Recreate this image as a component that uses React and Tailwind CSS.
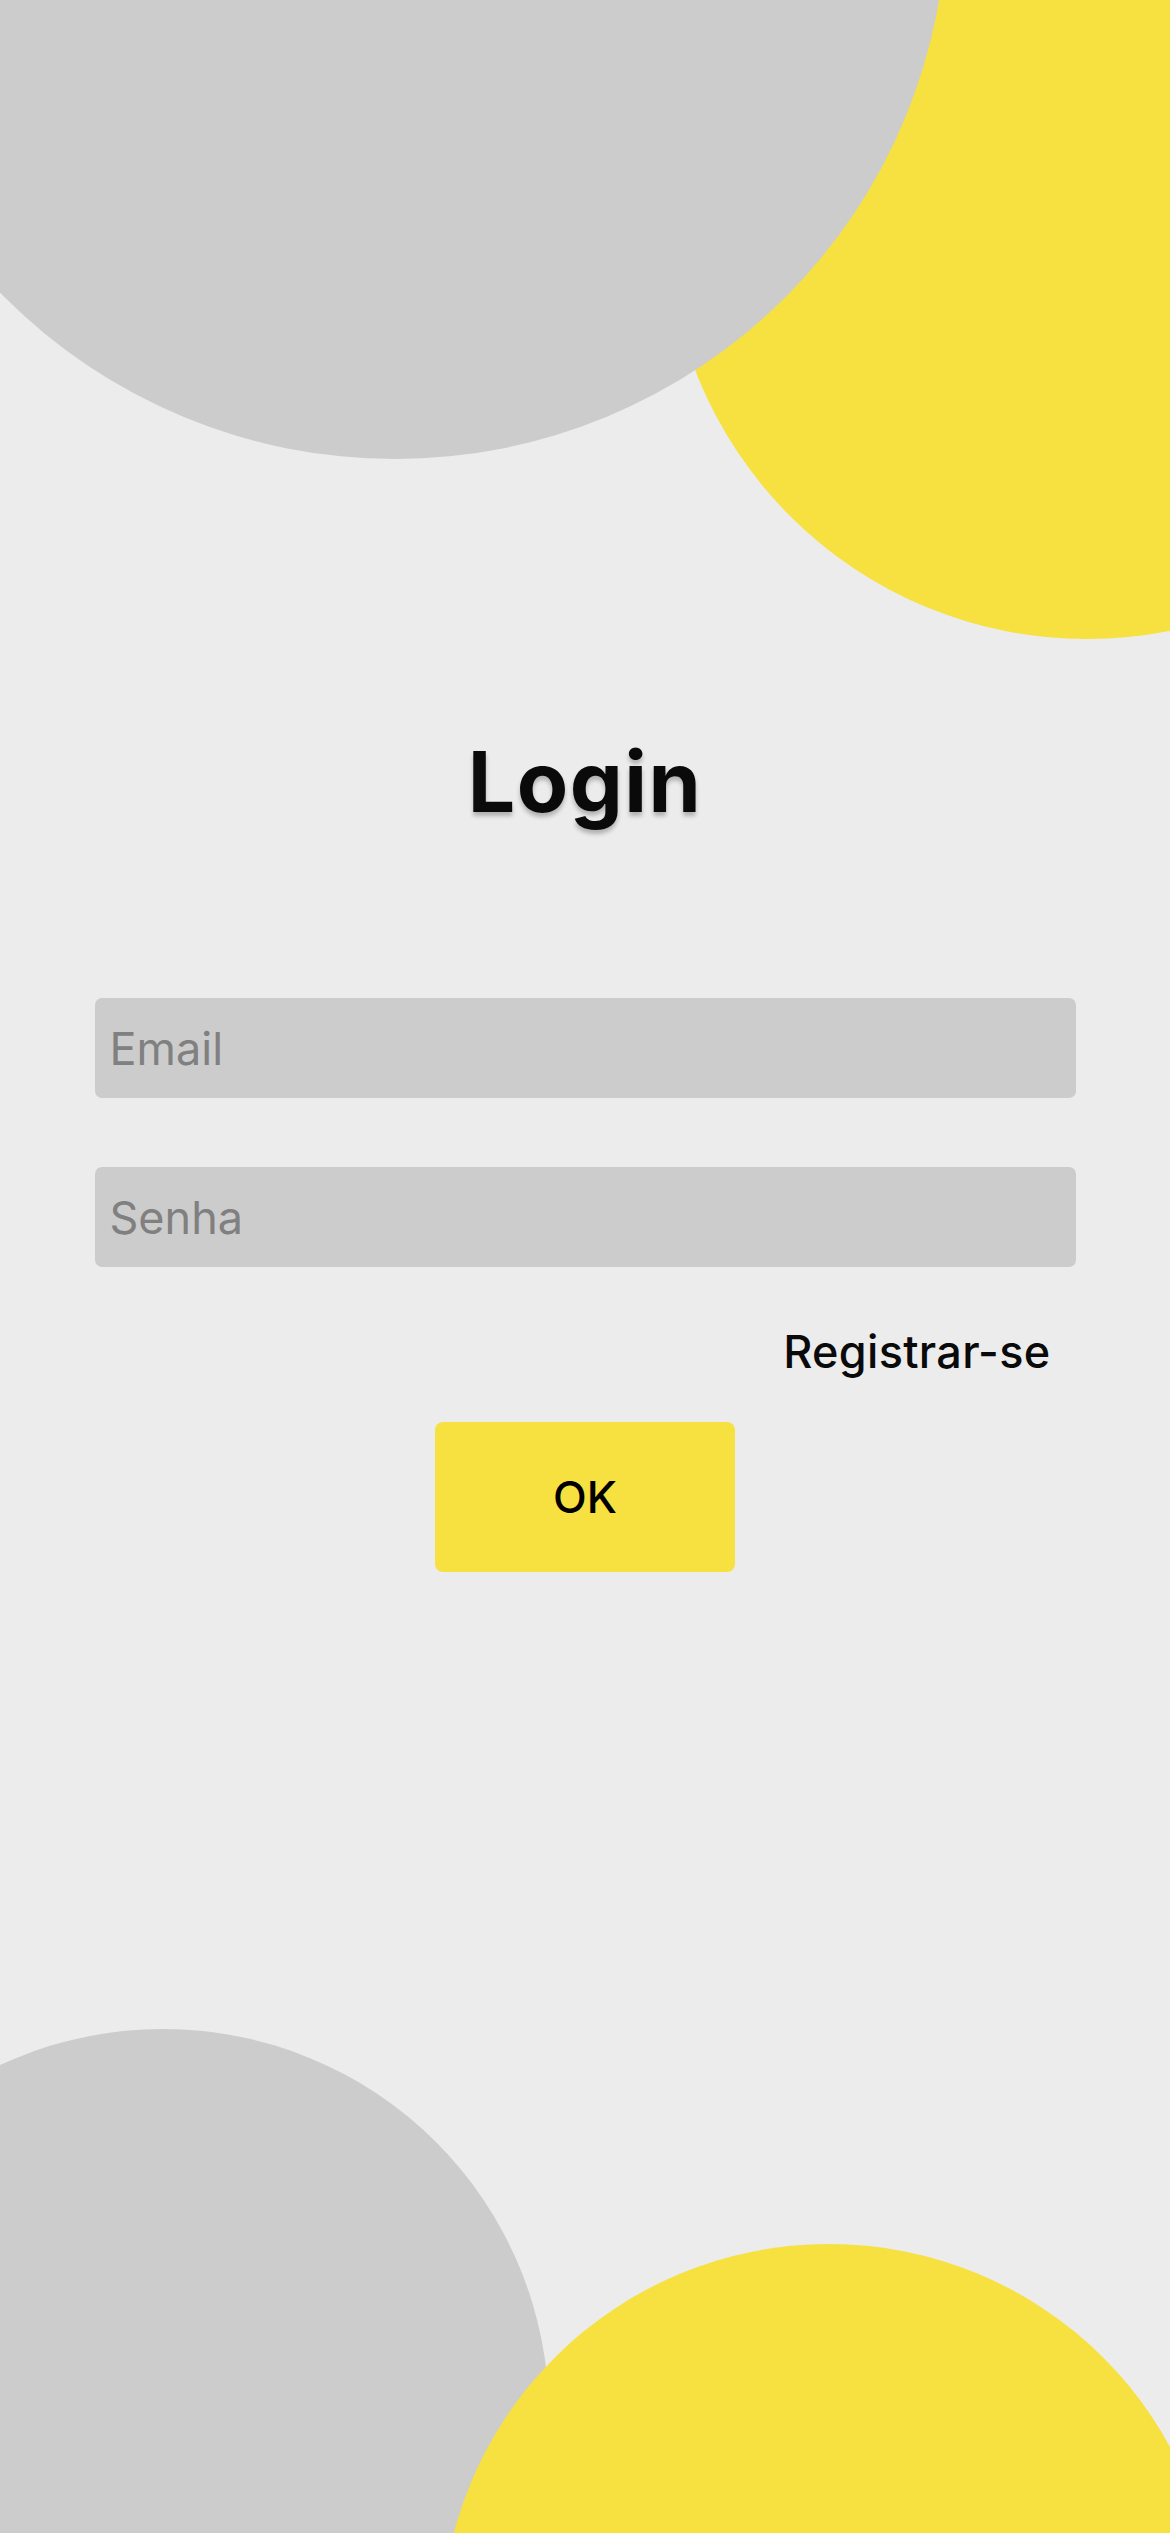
import React from 'react';

export default function App() {
  return (
    <div className="relative h-[2533px] w-full overflow-hidden bg-[#ECECEC] font-['Inter',sans-serif]">
      {/* background blobs */}
      <div className="absolute left-[667px] top-[-201px] h-[840px] w-[840px] rounded-full bg-[#F6E140]" />
      <div className="absolute left-[-157px] top-[-645px] h-[1104px] w-[1104px] rounded-full bg-[#CCCCCC]" />
      <div className="absolute left-[-223px] top-[2029px] h-[772px] w-[772px] rounded-full bg-[#CCCCCC]" />
      <div className="absolute left-[441px] top-[2244px] h-[776px] w-[776px] rounded-full bg-[#F6E140]" />

      <div className="relative flex flex-col items-center pt-[740px]">
        <h1 className="text-[84px] font-bold leading-none tracking-[1.5px] text-[#0a0a0a] [text-shadow:0_4px_4px_rgba(0,0,0,0.25)]">
          Login
        </h1>

        <div className="mt-[174px] flex w-[981px] flex-col gap-[69px]">
          <input
            type="email"
            placeholder="Email"
            className="h-[100px] w-full rounded-[7px] bg-[#CCCCCC] pl-[15px] text-[45px] text-black outline-none placeholder:text-[#808080]"
          />
          <input
            type="password"
            placeholder="Senha"
            className="h-[100px] w-full rounded-[7px] bg-[#CCCCCC] pl-[15px] text-[45px] text-black outline-none placeholder:text-[#808080]"
          />
        </div>

        <div className="mt-[62px] flex w-[981px] justify-end pr-[25px]">
          <span className="text-[45px] font-medium leading-none tracking-[0.3px] text-[#0a0a0a]">Registrar-se</span>
        </div>

        <button className="mt-[48px] flex h-[150px] w-[300px] items-center justify-center rounded-[8px] bg-[#F6E140] text-[44px] font-medium text-black">
          OK
        </button>
      </div>
    </div>
  );
}
